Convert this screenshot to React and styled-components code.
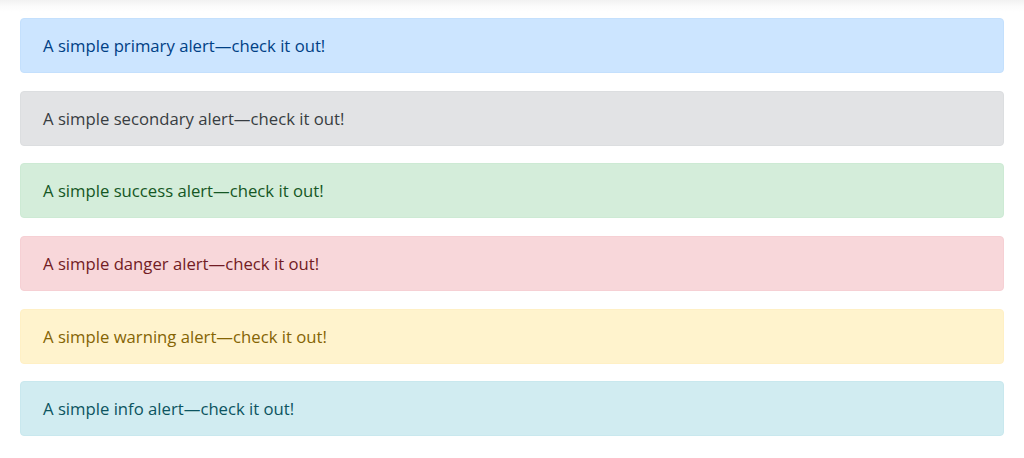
import React from "react";
import styled, { createGlobalStyle } from "styled-components";

const GlobalStyle = createGlobalStyle`
  body {
    margin: 0;
    background: #fff;
    font-family: "Open Sans", "Noto Sans", sans-serif;
  }
`;

const Page = styled.div`
  width: 1024px;
  height: 458px;
  overflow: hidden;
  background: linear-gradient(#f2f2f2 0px, #fbfbfb 6px, #fff 12px);
  padding: 18px 20px 0;
  box-sizing: border-box;
  display: flex;
  flex-direction: column;
  gap: 17.7px;
`;

const palettes = {
  primary: { bg: "#cce5ff", fg: "#004085", border: "#c4e0fd" },
  secondary: { bg: "#e2e3e5", fg: "#383d41", border: "#dcdee0" },
  success: { bg: "#d4edda", fg: "#155724", border: "#cdead4" },
  danger: { bg: "#f8d7da", fg: "#721c24", border: "#f6d0d4" },
  warning: { bg: "#fff3cd", fg: "#856404", border: "#fff0c5" },
  info: { bg: "#d1ecf1", fg: "#0c5460", border: "#c9e8ee" },
};

const Alert = styled.div`
  box-sizing: border-box;
  height: 55px;
  display: flex;
  align-items: center;
  padding: 0 22px;
  border: 1px solid ${({ $kind }) => palettes[$kind].border};
  border-radius: 4px;
  background: ${({ $kind }) => palettes[$kind].bg};
  color: ${({ $kind }) => palettes[$kind].fg};
  font-size: 16.7px;
`;

const kinds = ["primary", "secondary", "success", "danger", "warning", "info"];

const App = () => {
  return (
    <>
      <GlobalStyle />
      <Page>
        {kinds.map((k) => (
          <Alert key={k} $kind={k}>
            A simple {k} alert—check it out!
          </Alert>
        ))}
      </Page>
    </>
  );
};

export default App;
